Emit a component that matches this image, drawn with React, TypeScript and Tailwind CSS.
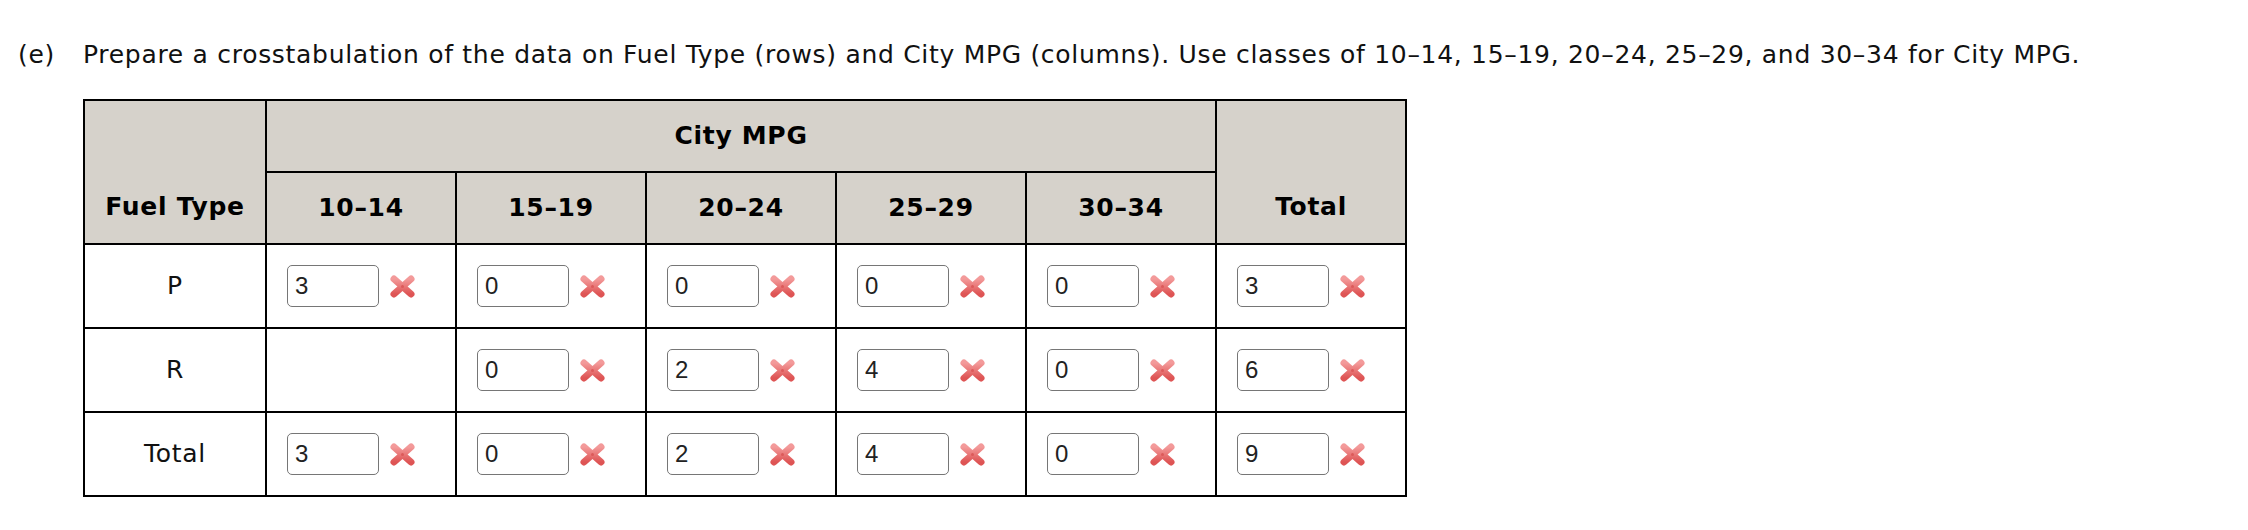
const COLS = ["10–14", "15–19", "20–24", "25–29", "30–34"];

type Row = { label: string; cells: (string | null)[]; total: string };

const ROWS: Row[] = [
  { label: "P", cells: ["3", "0", "0", "0", "0"], total: "3" },
  { label: "R", cells: [null, "0", "2", "4", "0"], total: "6" },
  { label: "Total", cells: ["3", "0", "2", "4", "0"], total: "9" },
];

function WrongMark() {
  return (
    <svg width="27" height="25" viewBox="0 0 27 25" className="shrink-0">
      <defs>
        <linearGradient id="xg" x1="0" y1="0" x2="0" y2="1">
          <stop offset="0" stopColor="#f39a9a" />
          <stop offset="1" stopColor="#de5454" />
        </linearGradient>
      </defs>
      <g stroke="url(#xg)" strokeWidth="7" strokeLinecap="round">
        <line x1="5" y1="5" x2="22" y2="20" />
        <line x1="22" y1="5" x2="5" y2="20" />
      </g>
      <circle cx="13.5" cy="12.5" r="1.5" fill="#dc5a5a" />
    </svg>
  );
}

function AnswerBox({ value }: { value: string }) {
  return (
    <div className="flex items-center gap-[10px]">
      <input
        type="text"
        value={value}
        readOnly
        className="w-[92px] h-[42px] border-[1.5px] border-[#767676] rounded-[5px] px-[7px] bg-white text-[24px] text-[#222] font-['Liberation_Sans',Arial,sans-serif] outline-none"
      />
      <WrongMark />
    </div>
  );
}

export default function App() {
  return (
    <div className="w-[2248px] h-[530px] bg-white text-black font-['DejaVu_Sans',Verdana,sans-serif] tracking-[0.7px]">
      {/* Question prompt */}
      <div className="pt-[41px] pl-[18px] text-[25px] leading-[28px] text-[#111]">
        <span className="inline-block w-[65px]">(e)</span>
        Prepare a crosstabulation of the data on Fuel Type (rows) and City MPG (columns). Use classes of 10–14, 15–19, 20–24, 25–29, and 30–34 for City MPG.
      </div>

      <div className="pl-[83px] pt-[30px]">
        <table className="table-fixed border-collapse border-2 border-black w-[1324px]">
          <colgroup>
            <col className="w-[182px]" />
            {COLS.map((c) => (
              <col key={c} className="w-[190px]" />
            ))}
            <col className="w-[190px]" />
          </colgroup>
          <thead className="bg-[#d6d2cb]">
            <tr className="h-[72px]">
              <th rowSpan={2} className="border-2 border-black align-bottom pb-[22px] text-[25px] leading-[28px] font-bold">
                Fuel Type
              </th>
              <th colSpan={5} className="border-2 border-black text-[25px] leading-[28px] font-bold">
                City MPG
              </th>
              <th rowSpan={2} className="border-2 border-black align-bottom pb-[22px] text-[25px] leading-[28px] font-bold">
                Total
              </th>
            </tr>
            <tr className="h-[72px]">
              {COLS.map((c) => (
                <th key={c} className="border-2 border-black text-[25px] leading-[28px] font-bold">
                  {c}
                </th>
              ))}
            </tr>
          </thead>
          <tbody>
            {ROWS.map((row) => (
              <tr key={row.label} className="h-[84px]">
                <td className="border-2 border-black text-center text-[25px] text-[#111]">{row.label}</td>
                {row.cells.map((v, i) => (
                  <td key={i} className="border-2 border-black pl-[20px]">
                    {v !== null && <AnswerBox value={v} />}
                  </td>
                ))}
                <td className="border-2 border-black pl-[20px]">
                  <AnswerBox value={row.total} />
                </td>
              </tr>
            ))}
          </tbody>
        </table>
      </div>
    </div>
  );
}
